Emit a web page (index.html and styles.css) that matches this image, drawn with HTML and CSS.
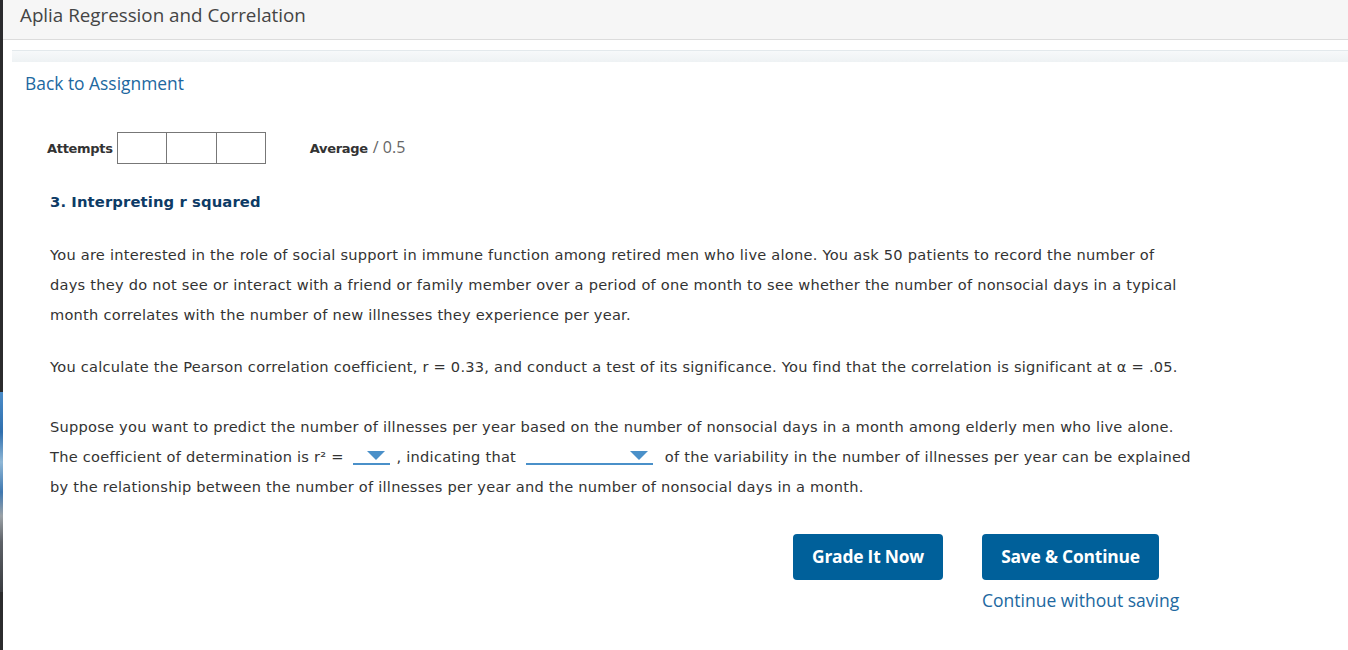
FILE: index.html
```html
<!DOCTYPE html>
<html>
<head>
<meta charset="utf-8">
<link rel="stylesheet" href="styles.css">
</head>
<body>
<div class="frame">
  <div class="edge"><div class="edge-img"></div></div>
  <div class="main">
    <header class="topbar"><h1 class="title">Aplia Regression and Correlation</h1></header>
    <div class="band"></div>
    <a class="back" href="#">Back to Assignment</a>
    <div class="stats">
      <div class="attempts">
        <span class="label">Attempts</span>
        <div class="boxes"><span class="box"></span><span class="box"></span><span class="box"></span></div>
      </div>
      <div class="average"><span class="label">Average</span><span class="score">/ 0.5</span></div>
    </div>
    <div class="question">
      <h2 class="qtitle">3. Interpreting r squared</h2>
      <p class="para">You are interested in the role of social support in immune function among retired men who live alone. You ask 50 patients to record the number of days they do not see or interact with a friend or family member over a period of one month to see whether the number of nonsocial days in a typical month correlates with the number of new illnesses they experience per year.</p>
      <p class="para">You calculate the Pearson correlation coefficient, r = 0.33, and conduct a test of its significance. You find that the correlation is significant at α = .05.</p>
      <p class="para">Suppose you want to predict the number of illnesses per year based on the number of nonsocial days in a month among elderly men who live alone. The coefficient of determination is r² = <span class="dd dd-short"><span class="tri"></span></span> , indicating that <span class="dd dd-long"><span class="tri"></span></span> of the variability in the number of illnesses per year can be explained by the relationship between the number of illnesses per year and the number of nonsocial days in a month.</p>
    </div>
    <div class="actions">
      <button class="btn btn-grade">Grade It Now</button>
      <div class="save-col">
        <button class="btn btn-save">Save &amp; Continue</button>
        <a class="cont" href="#">Continue without saving</a>
      </div>
    </div>
  </div>
</div>
</body>
</html>
```
FILE: styles.css
```css
html, body { margin: 0; padding: 0; background: #fff; }
.frame { display: flex; height: 650px; overflow: hidden; }
.edge { width: 3px; flex: none; background: #2b2b2d; display: flex; flex-direction: column; padding-top: 392px; }
.edge-img { height: 200px; background: linear-gradient(#4b8cc8 0%, #2f6fae 20%, #8fb7d6 35%, #3f78b0 50%, #9aa1a6 62%, #5d6167 75%, #3a3c40 100%); }
.main { flex: 1; min-width: 0; }
.topbar { height: 39px; background: #f6f6f6; border-bottom: 1px solid #dcdcdc; display: flex; align-items: center; padding-left: 17px; }
.title { margin: 0; font: 400 18.8px/1 "Open Sans", sans-serif; color: #444; position: relative; top: -4px; }
.band { margin: 10px 0 0 9px; height: 11px; border-top: 1px solid #e3e9ec; background: linear-gradient(#f7f9fa, #eef2f4); }
.back { display: block; margin: 10px 0 0 22px; font: 400 17.4px/22px "Open Sans", sans-serif; color: #21689f; text-decoration: none; }
.stats { display: flex; align-items: center; margin: 38px 0 0 44px; gap: 44px; }
.attempts { display: flex; align-items: center; gap: 4px; }
.label { font: 700 13px/1 "DejaVu Sans", Verdana, sans-serif; color: #333; letter-spacing: -0.3px; }
.boxes { display: flex; }
.box { width: 48px; height: 30px; border: 1px solid #777; }
.box + .box { margin-left: -1px; }
.box:nth-child(2) { width: 49px; }
.score { font: 400 16px/1 "Open Sans", sans-serif; color: #666; margin-left: 5px; }
.question { margin: 31px 0 0 47px; width: 1142px; }
.qtitle { margin: 0; font: 700 14.8px/1 "DejaVu Sans", Verdana, sans-serif; color: #0d3b66; letter-spacing: 0.1px; }
.para { margin: 0; font: 400 14.6px/30px "DejaVu Sans", Verdana, sans-serif; letter-spacing: 0.24px; color: #333; }
.qtitle + .para { margin-top: 30px; }
.para + .para { margin-top: 22px; }
.para:last-child { margin-top: 30px; }
.dd { display: inline-block; position: relative; height: 13px; border-bottom: 2px solid #4a90c9; vertical-align: -3px; }
.dd-short { width: 37px; margin: 0 2px 0 4px; }
.dd-long { width: 127px; margin: 0 7px 0 5px; }
.tri { position: absolute; right: 5px; top: 1px; width: 0; height: 0; border-left: 9px solid transparent; border-right: 9px solid transparent; border-top: 9px solid #4a90c9; }
.actions { display: flex; align-items: flex-start; gap: 39px; margin: 32px 0 0 790px; }
.btn { height: 46px; padding: 0 19px; background: #00609a; color: #fff; border: none; border-radius: 4px; font: 700 17.4px/1 "Open Sans", sans-serif; letter-spacing: -0.2px; }
.btn-grade { width: 150px; }
.btn-save { width: 177px; }
.save-col { display: flex; flex-direction: column; align-items: flex-start; }
.cont { margin-top: 8px; font: 400 17.5px/24px "Open Sans", sans-serif; color: #21689f; text-decoration: none; }
```
